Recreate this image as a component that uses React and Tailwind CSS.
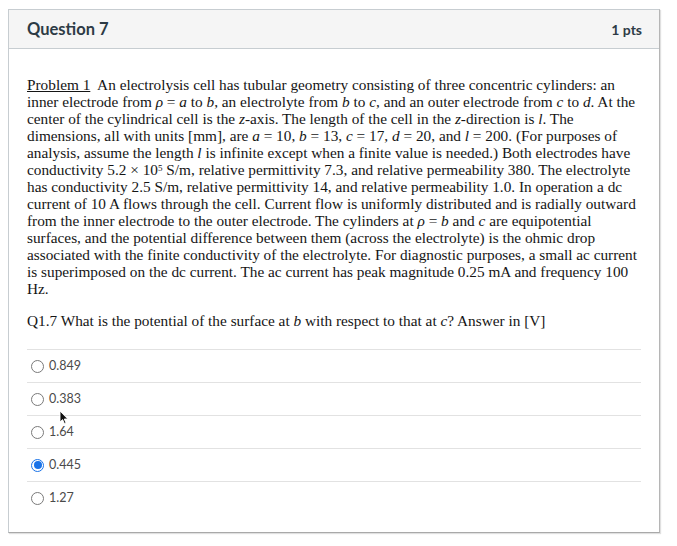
import React from 'react';

const lines = [
  <>
    <span className="underline">Problem 1</span>&nbsp; An electrolysis cell has tubular geometry consisting of three concentric cylinders: an
  </>,
  <>
    inner electrode from <i>ρ</i> = <i>a</i> to <i>b</i>, an electrolyte from <i>b</i> to <i>c</i>, and an outer electrode from <i>c</i> to <i>d</i>. At the
  </>,
  <>
    center of the cylindrical cell is the <i>z</i>-axis. The length of the cell in the <i>z</i>-direction is <i>l</i>. The
  </>,
  <>
    dimensions, all with units [mm], are <i>a</i> = 10, <i>b</i> = 13, <i>c</i> = 17, <i>d</i> = 20, and <i>l</i> = 200. (For purposes of
  </>,
  <>
    analysis, assume the length <i>l</i> is infinite except when a finite value is needed.) Both electrodes have
  </>,
  <>
    conductivity 5.2 × 10<sup className="text-[9px]">5</sup> S/m, relative permittivity 7.3, and relative permeability 380. The electrolyte
  </>,
  <>has conductivity 2.5 S/m, relative permittivity 14, and relative permeability 1.0. In operation a dc</>,
  <>current of 10 A flows through the cell. Current flow is uniformly distributed and is radially outward</>,
  <>
    from the inner electrode to the outer electrode. The cylinders at <i>ρ</i> = <i>b</i> and <i>c</i> are equipotential
  </>,
  <>surfaces, and the potential difference between them (across the electrolyte) is the ohmic drop</>,
  <>associated with the finite conductivity of the electrolyte. For diagnostic purposes, a small ac current</>,
  <>is superimposed on the dc current. The ac current has peak magnitude 0.25 mA and frequency 100</>,
  <>Hz.</>,
];

const answers = ['0.849', '0.383', '1.64', '0.445', '1.27'];
const picked = '0.445';

function Radio({ on }) {
  if (on) {
    return (
      <span className="w-[13px] h-[13px] rounded-full border border-[#1a73e8] bg-white flex items-center justify-center shrink-0">
        <span className="w-[8px] h-[8px] rounded-full bg-[#1a73e8]" />
      </span>
    );
  }
  return <span className="w-[13px] h-[13px] rounded-full border border-[#7a7a7a] bg-white shrink-0" />;
}

export default function App() {
  return (
    <div className="w-[677px] h-[546px] bg-white relative" style={{ fontFamily: 'Lato, "Noto Sans", sans-serif' }}>
      <div className="pt-[9px] pl-[8px]">
        <div className="w-[652px] h-[524px] border border-[#c7cdd1] border-r-[#b5b5b5] border-b-[#a9a9a9] shadow-[1px_1px_1px_rgba(0,0,0,0.12)]">
          {/* header */}
          <div className="h-[39px] bg-[#f5f5f5] border-b border-[#c7cdd1] flex items-center justify-between pl-[18px] pr-[17px]">
            <span className="text-[16.5px] font-bold text-[#2d3b45]">Question 7</span>
            <span className="text-[14px] font-bold text-[#2d3b45]">1 pts</span>
          </div>

          <div className="px-[18px] pt-[27px]">
            <div
              className="text-[15.3px] text-[#151515]"
              style={{ fontFamily: '"Liberation Serif", "DejaVu Serif", serif' }}
            >
              {lines.map((l, i) => (
                <div key={i} className="h-[17px] leading-[17px] whitespace-nowrap">
                  {l}
                </div>
              ))}
              <div className="h-[17px] leading-[17px] whitespace-nowrap mt-[15px]">
                Q1.7 What is the potential of the surface at <i>b</i> with respect to that at <i>c</i>? Answer in [V]
              </div>
            </div>

            <div className="mt-[20px]">
              {answers.map(a => (
                <div key={a} className="h-[33px] border-t border-[#e2e2e2] flex items-center gap-[5px] pl-[4px]">
                  <Radio on={a === picked} />
                  <span className="text-[12.5px] text-[#4a4a4a]">{a}</span>
                </div>
              ))}
            </div>
          </div>
        </div>
      </div>

      {/* mouse pointer */}
      <svg className="absolute left-[59px] top-[410px]" width="10" height="15" viewBox="0 0 10 15">
        <path d="M1 1 L1 12 L3.6 9.6 L5.4 13.6 L7 12.9 L5.3 9 L8.8 9 Z" fill="#111" stroke="#fff" strokeWidth="0.9" />
      </svg>
    </div>
  );
}
